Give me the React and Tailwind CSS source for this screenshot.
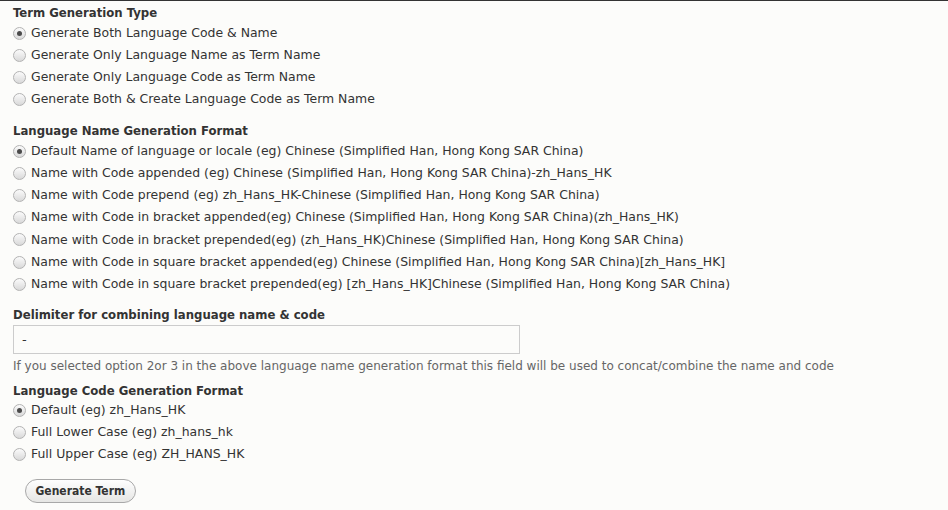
import React from "react";

const font = { fontFamily: '"DejaVu Sans", Verdana, sans-serif' };
const boldFont = { fontFamily: '"DejaVu Sans Condensed", "DejaVu Sans", Verdana, sans-serif' };

function Radio({ checked, label, tall }) {
  return (
    <div className={"flex items-center " + (tall ? "h-[22.2px]" : "h-[22px]")}>
      <span className="w-[13px] h-[13px] rounded-full border border-[#b3b3b3] bg-gradient-to-b from-[#fbfbfb] to-[#d9d9d9] flex items-center justify-center shrink-0">
        {checked && <span className="w-[5px] h-[5px] rounded-full bg-[#4a4a4a]" />}
      </span>
      <span className="ml-[5px] text-[12.45px] text-[#333] whitespace-nowrap">{label}</span>
    </div>
  );
}

function Heading({ children }) {
  return (
    <div style={boldFont} className="h-[18px] flex items-center text-[13px] font-bold text-[#333] whitespace-nowrap">
      {children}
    </div>
  );
}

export default function App() {
  return (
    <div style={font} className="w-[948px] h-[510px] bg-[#fcfcfa] border-t border-[#333] pl-[13px] pt-[3px] overflow-hidden">
      <Heading>Term Generation Type</Heading>
      <Radio checked label="Generate Both Language Code & Name" />
      <Radio label="Generate Only Language Name as Term Name" />
      <Radio label="Generate Only Language Code as Term Name" />
      <Radio label="Generate Both & Create Language Code as Term Name" />

      <div className="mt-[12px]">
        <Heading>Language Name Generation Format</Heading>
        <Radio tall checked label="Default Name of language or locale (eg) Chinese (Simplified Han, Hong Kong SAR China)" />
        <Radio tall label="Name with Code appended (eg) Chinese (Simplified Han, Hong Kong SAR China)-zh_Hans_HK" />
        <Radio tall label="Name with Code prepend (eg) zh_Hans_HK-Chinese (Simplified Han, Hong Kong SAR China)" />
        <Radio tall label="Name with Code in bracket appended(eg) Chinese (Simplified Han, Hong Kong SAR China)(zh_Hans_HK)" />
        <Radio tall label="Name with Code in bracket prepended(eg) (zh_Hans_HK)Chinese (Simplified Han, Hong Kong SAR China)" />
        <Radio tall label="Name with Code in square bracket appended(eg) Chinese (Simplified Han, Hong Kong SAR China)[zh_Hans_HK]" />
        <Radio tall label="Name with Code in square bracket prepended(eg) [zh_Hans_HK]Chinese (Simplified Han, Hong Kong SAR China)" />
      </div>

      <div className="mt-[10.5px]">
        <Heading>Delimiter for combining language name & code</Heading>
        <div className="mt-[1px] w-[507px] h-[29px] border border-[#ccc] bg-[#fcfcfa] flex items-center px-[8px] text-[13px] text-[#333]">
          -
        </div>
        <div className="mt-[5px] h-[14px] flex items-center text-[12px] text-[#666] whitespace-nowrap">
          If you selected option 2or 3 in the above language name generation format this field will be used to concat/combine the name and code
        </div>
      </div>

      <div className="mt-[9px]">
        <Heading>Language Code Generation Format</Heading>
        <Radio checked label="Default (eg) zh_Hans_HK" />
        <Radio label="Full Lower Case (eg) zh_hans_hk" />
        <Radio label="Full Upper Case (eg) ZH_HANS_HK" />
      </div>

      <div className="mt-[12px] ml-[12px]">
        <button style={boldFont} className="h-[24px] px-[9.5px] rounded-full border border-[#a8a8a8] bg-gradient-to-b from-[#fefefe] to-[#e6e6e4] text-[12px] font-bold text-[#333]">
          Generate Term
        </button>
      </div>
    </div>
  );
}
